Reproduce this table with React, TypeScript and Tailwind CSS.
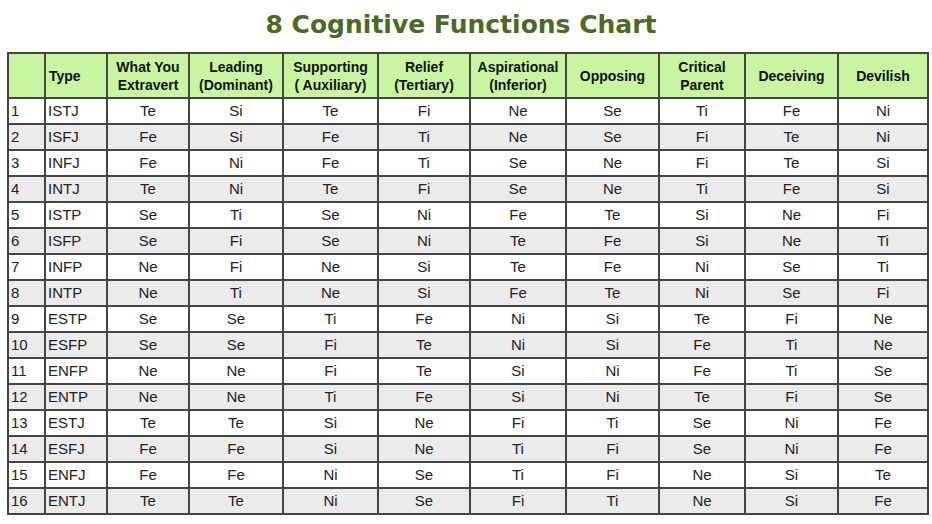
const headers: [string, string?][] = [
  ["What You", "Extravert"],
  ["Leading", "(Dominant)"],
  ["Supporting", "( Auxiliary)"],
  ["Relief", "(Tertiary)"],
  ["Aspirational", "(Inferior)"],
  ["Opposing"],
  ["Critical", "Parent"],
  ["Deceiving"],
  ["Devilish"],
];

const rows: string[][] = [
  ["ISTJ", "Te", "Si", "Te", "Fi", "Ne", "Se", "Ti", "Fe", "Ni"],
  ["ISFJ", "Fe", "Si", "Fe", "Ti", "Ne", "Se", "Fi", "Te", "Ni"],
  ["INFJ", "Fe", "Ni", "Fe", "Ti", "Se", "Ne", "Fi", "Te", "Si"],
  ["INTJ", "Te", "Ni", "Te", "Fi", "Se", "Ne", "Ti", "Fe", "Si"],
  ["ISTP", "Se", "Ti", "Se", "Ni", "Fe", "Te", "Si", "Ne", "Fi"],
  ["ISFP", "Se", "Fi", "Se", "Ni", "Te", "Fe", "Si", "Ne", "Ti"],
  ["INFP", "Ne", "Fi", "Ne", "Si", "Te", "Fe", "Ni", "Se", "Ti"],
  ["INTP", "Ne", "Ti", "Ne", "Si", "Fe", "Te", "Ni", "Se", "Fi"],
  ["ESTP", "Se", "Se", "Ti", "Fe", "Ni", "Si", "Te", "Fi", "Ne"],
  ["ESFP", "Se", "Se", "Fi", "Te", "Ni", "Si", "Fe", "Ti", "Ne"],
  ["ENFP", "Ne", "Ne", "Fi", "Te", "Si", "Ni", "Fe", "Ti", "Se"],
  ["ENTP", "Ne", "Ne", "Ti", "Fe", "Si", "Ni", "Te", "Fi", "Se"],
  ["ESTJ", "Te", "Te", "Si", "Ne", "Fi", "Ti", "Se", "Ni", "Fe"],
  ["ESFJ", "Fe", "Fe", "Si", "Ne", "Ti", "Fi", "Se", "Ni", "Fe"],
  ["ENFJ", "Fe", "Fe", "Ni", "Se", "Ti", "Fi", "Ne", "Si", "Te"],
  ["ENTJ", "Te", "Te", "Ni", "Se", "Fi", "Ti", "Ne", "Si", "Fe"],
];

// border-to-border widths read off the screenshot
const colWidths = [37, 62, 82, 94, 95, 92, 96, 93, 86, 93, 90];

export default function App() {
  return (
    <div className="min-h-[524px] w-[932px] bg-white font-['Liberation_Sans',Arial,sans-serif]">
      <h1 className="flex h-[52px] items-center justify-center pb-[3px] pr-[10px] font-['DejaVu_Sans',Verdana,sans-serif] text-[25px] font-bold text-[#4b6a24]">
        8 Cognitive Functions Chart
      </h1>
      <table className="ml-[7px] w-[920px] table-fixed border-collapse border-2 border-[#444]">
        <colgroup>
          {colWidths.map((w, i) => (
            <col key={i} style={{ width: w }} />
          ))}
        </colgroup>
        <thead>
          <tr className="h-[45px] bg-[#c9f5a0] text-[14px] font-bold leading-[18px] text-[#111]">
            <th className="border-2 border-[#444]" />
            <th className="border-2 border-[#444] px-[3px] text-left">Type</th>
            {headers.map(([a, b], i) => (
              <th key={i} className="border-2 border-[#444] px-[2px] text-center">
                {a}
                {b && <br />}
                {b}
              </th>
            ))}
          </tr>
        </thead>
        <tbody>
          {rows.map((row, i) => (
            <tr
              key={i}
              className={`h-[26px] text-[15px] text-[#222] ${i % 2 === 1 ? "bg-[#ebebeb]" : "bg-white"}`}
            >
              <td className="border-2 border-[#444] px-[2px] text-left">{i + 1}</td>
              <td className="border-2 border-[#444] px-[2px] text-left">{row[0]}</td>
              {row.slice(1).map((c, j) => (
                <td key={j} className="border-2 border-[#444] text-center">
                  {c}
                </td>
              ))}
            </tr>
          ))}
        </tbody>
      </table>
    </div>
  );
}
